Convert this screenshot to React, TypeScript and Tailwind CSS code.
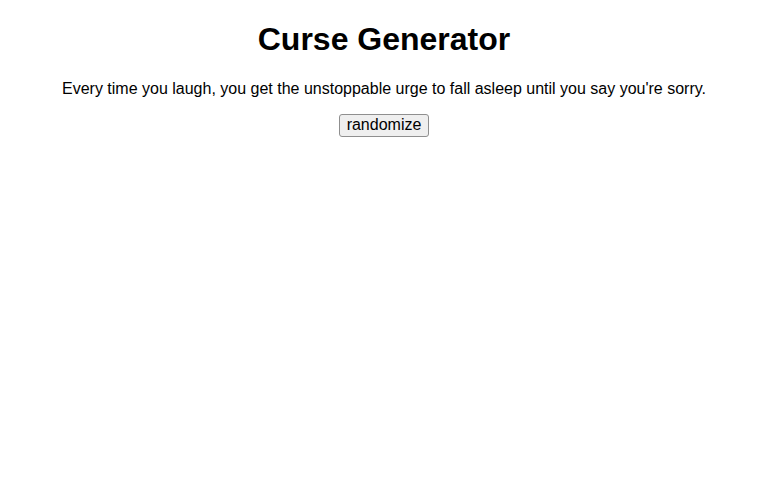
import React, { useState } from "react";

const subjects = [
  "Every time you laugh",
  "Whenever you sneeze",
  "Each time you open a door",
  "Every time you say hello",
];
const urges = [
  "fall asleep",
  "start dancing",
  "sing loudly",
  "hop on one foot",
];
const endings = [
  "you say you're sorry",
  "the sun goes down",
  "someone claps twice",
  "you drink a glass of water",
];

const pick = (list: string[]) => list[Math.floor(Math.random() * list.length)];

const App: React.FC = () => {
  const [curse, setCurse] = useState(
    "Every time you laugh, you get the unstoppable urge to fall asleep until you say you're sorry."
  );

  const randomize = () => {
    setCurse(
      `${pick(subjects)}, you get the unstoppable urge to ${pick(urges)} until ${pick(endings)}.`
    );
  };

  return (
    <div className="min-h-screen bg-white text-black text-center font-['Liberation_Sans',Arial,sans-serif] text-[16px] leading-[normal] flow-root">
      <h1 className="text-[32px] leading-[normal] font-bold my-[21.44px]">Curse Generator</h1>
      <p className="text-[16px] leading-[normal] mt-[21.44px] mb-4">{curse}</p>
      <button
        onClick={randomize}
        className="text-[16px] leading-[normal] text-black bg-[#efefef] border border-[#8f8f8f] rounded-[3px] px-[7px] py-[1.5px] hover:bg-[#e5e5e5]"
      >
        randomize
      </button>
    </div>
  );
};

export default App;
